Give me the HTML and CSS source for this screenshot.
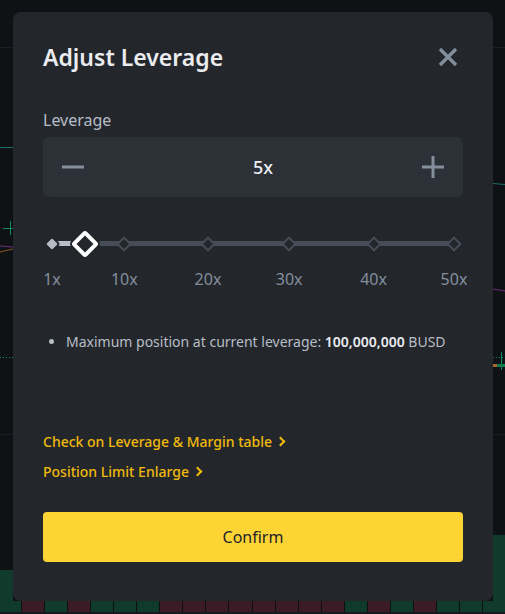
FILE: index.html
```html
<!DOCTYPE html>
<html lang="en">
<head>
    <meta charset="UTF-8">
    <meta name="viewport" content="width=device-width, initial-scale=1.0">
    <title>Adjust Leverage</title>
    <link rel="stylesheet" href="styles.css">
</head>
<body>
    <!-- chart behind the dialog -->
    <svg class="chart" width="505" height="614" viewBox="0 0 505 614">
        <line x1="0" y1="47.5" x2="505" y2="47.5" stroke="#1b1f24" />
        <line x1="0" y1="434.5" x2="505" y2="434.5" stroke="#1b1f24" />
        <line x1="0" y1="147.5" x2="13" y2="147.5" stroke="#1f6d6a" />
        <line x1="493" y1="183.5" x2="505" y2="184.5" stroke="#1f6d6a" />
        <line x1="10.5" y1="221" x2="10.5" y2="235" stroke="#128a5a" />
        <line x1="3" y1="228.5" x2="13" y2="228.5" stroke="#128a5a" />
        <line x1="0" y1="246" x2="13" y2="247" stroke="#6b2d7c" />
        <line x1="0" y1="252" x2="13" y2="249" stroke="#8a5a22" />
        <line x1="493" y1="289" x2="505" y2="291" stroke="#6b2d7c" />
        <line x1="0" y1="357.5" x2="13" y2="357.5" stroke="#128a5a" stroke-dasharray="1 2" />
        <line x1="493" y1="357.5" x2="505" y2="357.5" stroke="#128a5a" stroke-dasharray="1 2" />
        <line x1="501.5" y1="352" x2="501.5" y2="370" stroke="#128a5a" />
        <rect x="493" y="364" width="12" height="3" fill="#0e7a50" />
        <rect x="493" y="364" width="4" height="3" fill="#a8662a" />
        <rect x="0" y="570" width="13" height="31" fill="#0f3a2c" />
        <rect x="493" y="535" width="12" height="66" fill="#0f3a2c" />
    </svg>

    <div class="volume">
        <span class="up"></span><span class="down"></span><span class="up"></span><span class="down"></span>
        <span class="up"></span><span class="up"></span><span class="up"></span><span class="down"></span>
        <span class="down"></span><span class="down"></span><span class="down"></span><span class="down"></span>
        <span class="down"></span><span class="down"></span><span class="down"></span><span class="up"></span>
        <span class="down"></span><span class="up"></span><span class="down"></span><span class="up"></span>
        <span class="up"></span><span class="up"></span>
    </div>

    <div class="modal">
        <div class="modal-head">
            <h2 class="modal-title">Adjust Leverage</h2>
            <svg class="close" width="20" height="20" viewBox="0 0 20 20">
                <path d="M2 2 L18 18 M18 2 L2 18" stroke="#848e9c" stroke-width="3.4" />
            </svg>
        </div>

        <div class="field-label">Leverage</div>
        <div class="stepper">
            <svg width="24" height="24" viewBox="0 0 24 24">
                <path d="M1 12 H23" stroke="#848e9c" stroke-width="3" />
            </svg>
            <span class="stepper-value">5x</span>
            <svg width="24" height="24" viewBox="0 0 24 24">
                <path d="M1 12 H23 M12 1 V23" stroke="#848e9c" stroke-width="3" />
            </svg>
        </div>

        <div class="slider">
            <div class="track">
                <div class="fill"></div>
                <span class="mark mark-on" style="left: 0%"></span>
                <span class="mark" style="left: 18%"></span>
                <span class="mark" style="left: 38.8%"></span>
                <span class="mark" style="left: 59%"></span>
                <span class="mark" style="left: 80%"></span>
                <span class="mark" style="left: 100%"></span>
                <span class="thumb" style="left: 8.16%"></span>
            </div>
            <div class="ticks">
                <span style="left: 0%">1x</span>
                <span style="left: 18%">10x</span>
                <span style="left: 38.8%">20x</span>
                <span style="left: 59%">30x</span>
                <span style="left: 80%">40x</span>
                <span style="left: 100%">50x</span>
            </div>
        </div>

        <ul class="notes">
            <li>Maximum position at current leverage: <b>100,000,000</b> BUSD</li>
        </ul>

        <div class="links">
            <a class="link" href="#">Check on Leverage &amp; Margin table <i class="chev"></i></a>
            <a class="link" href="#">Position Limit Enlarge <i class="chev"></i></a>
        </div>

        <button class="confirm">Confirm</button>
    </div>
</body>
</html>
```

FILE: styles.css
```css
body {
    margin: 0;
    width: 505px;
    height: 614px;
    position: relative;
    overflow: hidden;
    background-color: #0f1214;
    font-family: "Noto Sans", Arial, sans-serif;
    box-sizing: border-box;
    padding: 12px 12px 0 13px;
}
.chart {
    position: absolute;
    left: 0;
    top: 0;
}
.volume {
    position: absolute;
    left: -1px;
    right: 0;
    top: 601px;
    height: 11px;
    display: flex;
    gap: 1px;
    background-color: #0d1013;
    border-bottom: 2px solid #161a1e;
}
.volume span {
    flex: 1;
}
.volume .up {
    background-color: #0f3a2c;
}
.volume .down {
    background-color: #3b1c24;
}
.modal {
    position: relative;
    width: 480px;
    height: 589px;
    box-sizing: border-box;
    padding: 30px 30px 0 30px;
    background-color: #23272c;
    border-radius: 8px;
    color: #eaecef;
}
.modal-head {
    display: flex;
    justify-content: space-between;
    align-items: center;
    height: 30px;
}
.modal-title {
    margin: 0;
    font-size: 23px;
    font-weight: 600;
    color: #eaecef;
}
.close {
    margin-right: 5px;
}
.field-label {
    margin-top: 37px;
    font-size: 16px;
    line-height: 22px;
    color: #b7bdc6;
}
.stepper {
    margin-top: 6px;
    height: 60px;
    display: flex;
    align-items: center;
    justify-content: space-between;
    padding: 0 18px 0 18px;
    background-color: #2b3137;
    border-radius: 6px;
}
.stepper-value {
    margin-left: 20px;
    font-size: 18px;
    font-weight: 500;
    color: #eaecef;
}
.slider {
    margin-top: 44px;
    padding: 0 9px;
}
.track {
    position: relative;
    height: 5px;
    background-color: #474d57;
}
.fill {
    position: absolute;
    left: 0;
    top: 0;
    bottom: 0;
    width: 8.16%;
    background-color: #b7bdc6;
}
.mark {
    position: absolute;
    top: 50%;
    width: 11px;
    height: 11px;
    box-sizing: border-box;
    border: 2px solid #474d57;
    background-color: #23272c;
    border-radius: 1px;
    transform: translate(-50%, -50%) rotate(45deg);
}
.mark-on {
    width: 8px;
    height: 8px;
    border: 0;
    background-color: #b7bdc6;
    box-shadow: 0 0 0 2px #23272c;
}
.thumb {
    position: absolute;
    top: 50%;
    width: 20px;
    height: 20px;
    box-sizing: border-box;
    border: 4px solid #ffffff;
    background-color: #23272c;
    border-radius: 3px;
    box-shadow: 0 0 0 2px #23272c;
    transform: translate(-50%, -50%) rotate(45deg);
}
.ticks {
    position: relative;
    height: 20px;
    margin-top: 23px;
    font-size: 16px;
    color: #848e9c;
}
.ticks span {
    position: absolute;
    top: 0;
    transform: translateX(-50%);
    line-height: 20px;
}
.notes {
    margin: 43px 0 0 0;
    padding: 0 0 0 23px;
    font-size: 14px;
    line-height: 20px;
    color: #b7bdc6;
}
.notes b {
    font-weight: 600;
    color: #eaecef;
}
.links {
    margin-top: 80px;
    display: flex;
    flex-direction: column;
    gap: 10px;
}
.link {
    font-size: 14px;
    line-height: 20px;
    font-weight: 500;
    color: #f0b90b;
    text-decoration: none;
}
.chev {
    display: inline-block;
    width: 5px;
    height: 5px;
    margin-left: 1px;
    border-top: 2px solid #f0b90b;
    border-right: 2px solid #f0b90b;
    transform: rotate(45deg);
    vertical-align: 2px;
}
.confirm {
    display: block;
    width: 100%;
    height: 50px;
    margin-top: 30px;
    border: 0;
    border-radius: 4px;
    background-color: #fcd535;
    color: #1e2329;
    font-family: inherit;
    font-size: 16px;
    font-weight: 400;
}
```
